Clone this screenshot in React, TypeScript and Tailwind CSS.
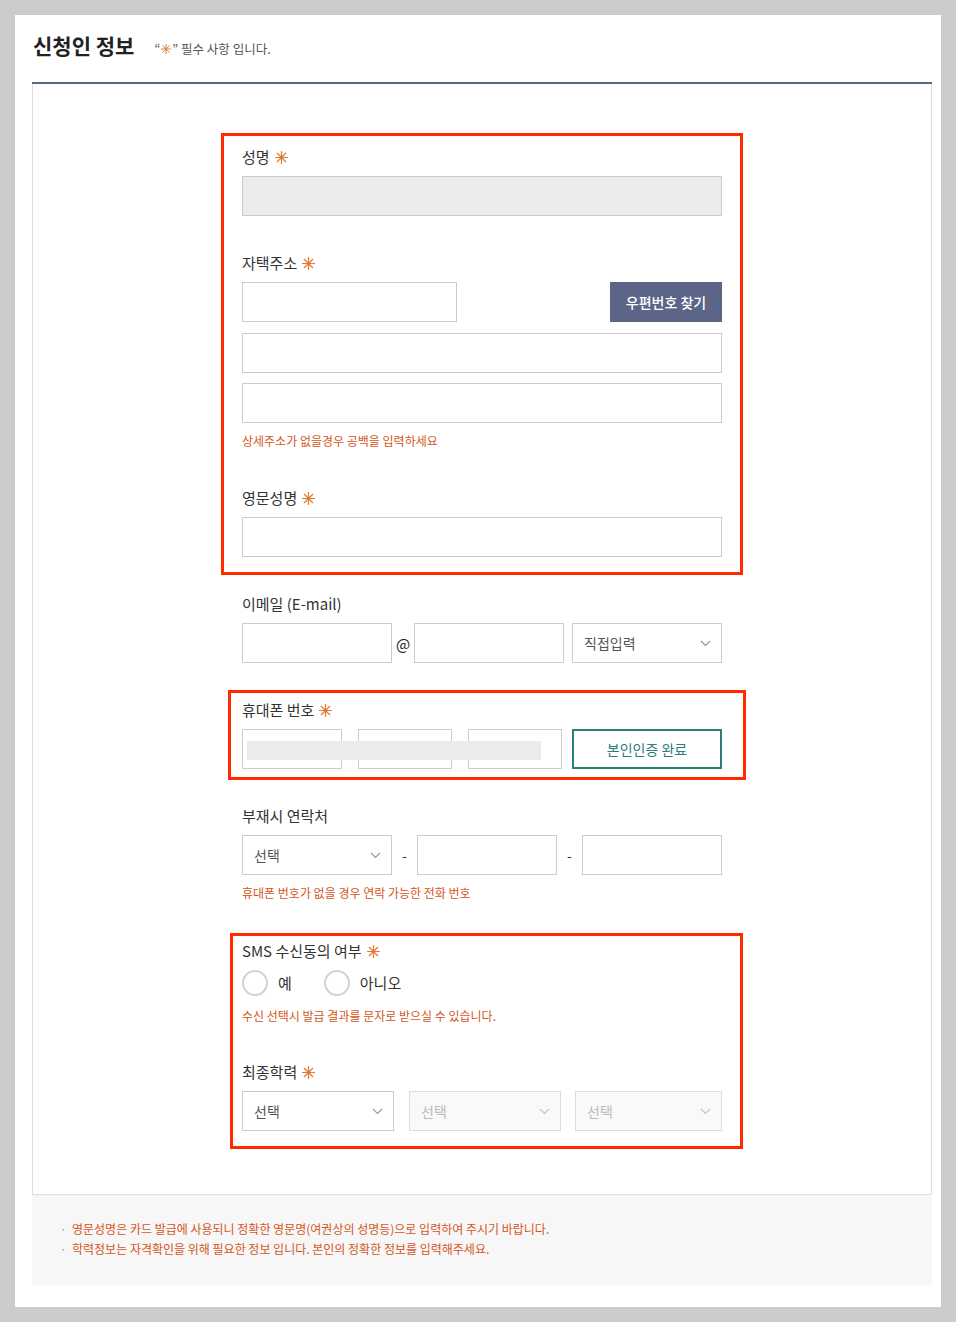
import React from "react";

const Star = ({ size = 12, className = "" }: { size?: number; className?: string }) => (
  <svg width={size} height={size} viewBox="0 0 12 12" className={`inline-block align-middle ${className}`}>
    <g stroke="#e0782f" strokeWidth="1.1" strokeLinecap="round">
      <line x1="6" y1="0.5" x2="6" y2="11.5" />
      <line x1="0.5" y1="6" x2="11.5" y2="6" />
      <line x1="2.1" y1="2.1" x2="9.9" y2="9.9" />
      <line x1="9.9" y1="2.1" x2="2.1" y2="9.9" />
    </g>
  </svg>
);

const Chevron = ({ color = "#9a9a9a" }: { color?: string }) => (
  <svg width="11" height="7" viewBox="0 0 11 7" className="shrink-0">
    <path d="M1 1 L5.5 5.5 L10 1" fill="none" stroke={color} strokeWidth="1.2" />
  </svg>
);

const Label = ({ children, star = false }: { children: React.ReactNode; star?: boolean }) => (
  <div className="h-[23px] leading-[23px] mb-[8px] text-[15px] text-[#333333]">
    {children}
    {star && <Star size={13} className="ml-[5px] -mt-[2px]" />}
  </div>
);

const Input = ({ className = "" }: { className?: string }) => (
  <div className={`h-[40px] border border-[#cccccc] bg-white ${className}`} />
);

const Select = ({
  text,
  className = "",
  disabled = false,
}: {
  text: string;
  className?: string;
  disabled?: boolean;
}) => (
  <div
    className={`h-[40px] border flex items-center justify-between pl-[11px] pr-[10px] text-[14px] ${
      disabled ? "bg-[#f9f9f9] border-[#dddddd] text-[#bbbbbb]" : "bg-white border-[#cccccc] text-[#555555]"
    } ${className}`}
  >
    <span>{text}</span>
    <Chevron color={disabled ? "#c4c4c4" : "#9a9a9a"} />
  </div>
);

const Hint = ({ children, className = "" }: { children: React.ReactNode; className?: string }) => (
  <div className={`text-[12px] leading-[18px] text-[#d4561c] ${className}`}>{children}</div>
);

const Radio = ({ label }: { label: string }) => (
  <div className="flex items-center">
    <div className="w-[26px] h-[26px] rounded-full border-[2.5px] border-[#d2d2d2] bg-white" />
    <span className="ml-[10px] text-[15px] text-[#333333]">{label}</span>
  </div>
);

export default function App() {
  return (
    <div
      className="min-h-[1322px] bg-[#cccccc] p-[15px]"
      style={{ fontFamily: '"Noto Sans CJK KR", "Noto Sans", sans-serif' }}
    >
      <div className="bg-white pb-[22px]">
        <div className="ml-[17px] mr-[9px]">
          {/* Header */}
          <div className="h-[67px] flex items-center pb-[5px] pl-[1px]">
            <h1 className="text-[21px] font-bold text-[#222222]">신청인 정보</h1>
            <span className="ml-[20px] mt-[6px] text-[12.5px] text-[#555555] flex items-center">
              “<Star size={10} className="mx-[1px]" />” 필수 사항 입니다.
            </span>
          </div>
          <div className="h-[2px] bg-[#5b6587]" />

          {/* Panel */}
          <div className="border-x border-b border-[#dddddd] pt-[61px] pb-[63px]">
            <div className="relative mx-auto w-[480px]">
              {/* 성명 */}
              <Label star>성명</Label>
              <div className="h-[40px] border border-[#cccccc] bg-[#ebebeb]" />

              {/* 자택주소 */}
              <div className="mt-[35px]">
                <Label star>자택주소</Label>
                <div className="flex justify-between">
                  <Input className="w-[215px]" />
                  <button className="w-[112px] h-[40px] bg-[#5b6587] text-white text-[14px] font-medium">
                    우편번호 찾기
                  </button>
                </div>
                <Input className="mt-[11px]" />
                <Input className="mt-[10px]" />
                <Hint className="mt-[9px]">상세주소가 없을경우 공백을 입력하세요</Hint>
              </div>

              {/* 영문성명 */}
              <div className="mt-[36px]">
                <Label star>영문성명</Label>
                <Input />
              </div>

              {/* 이메일 */}
              <div className="mt-[35px]">
                <Label>이메일 (E-mail)</Label>
                <div className="flex items-center">
                  <Input className="w-[150px]" />
                  <span className="w-[22px] text-center text-[15px] text-[#222222] pt-[2px]">@</span>
                  <Input className="w-[150px]" />
                  <Select text="직접입력" className="w-[150px] ml-[8px]" />
                </div>
              </div>

              {/* 휴대폰 번호 */}
              <div className="mt-[35px]">
                <Label star>휴대폰 번호</Label>
                <div className="relative flex">
                  <Input className="w-[100px]" />
                  <Input className="w-[94px] ml-[16px]" />
                  <Input className="w-[94px] ml-[16px]" />
                  <button className="w-[150px] h-[40px] ml-[10px] border-2 border-[#2a7f7a] bg-white text-[#2a7f7a] text-[14px]">
                    본인인증 완료
                  </button>
                  <div className="absolute left-[5px] top-[12px] w-[294px] h-[19px] bg-[#ebebeb]" />
                </div>
              </div>

              {/* 부재시 연락처 */}
              <div className="mt-[35px]">
                <Label>부재시 연락처</Label>
                <div className="flex items-center">
                  <Select text="선택" className="w-[150px]" />
                  <span className="w-[25px] text-center text-[14px] text-[#333333]">-</span>
                  <Input className="w-[140px]" />
                  <span className="w-[25px] text-center text-[14px] text-[#333333]">-</span>
                  <Input className="w-[140px]" />
                </div>
                <Hint className="mt-[9px]">휴대폰 번호가 없을 경우 연락 가능한 전화 번호</Hint>
              </div>

              {/* SMS */}
              <div className="mt-[37px]">
                <Label star>SMS 수신동의 여부</Label>
                <div className="flex items-center h-[26px]">
                  <Radio label="예" />
                  <div className="ml-[32px]">
                    <Radio label="아니오" />
                  </div>
                </div>
                <Hint className="mt-[11px]">수신 선택시 발급 결과를 문자로 받으실 수 있습니다.</Hint>
              </div>

              {/* 최종학력 */}
              <div className="mt-[35px]">
                <Label star>최종학력</Label>
                <div className="flex">
                  <Select text="선택" className="w-[152px]" />
                  <Select text="선택" className="w-[152px] ml-[15px]" disabled />
                  <Select text="선택" className="w-[147px] ml-[14px]" disabled />
                </div>
              </div>

              {/* Annotation overlays */}
              <div className="pointer-events-none absolute left-[-21px] top-[-12px] w-[522px] h-[442px] border-[3px] border-[#ff2a00]" />
              <div className="pointer-events-none absolute left-[-14px] top-[545px] w-[518px] h-[90px] border-[3px] border-[#ff2a00]" />
              <div className="pointer-events-none absolute left-[-12px] top-[788px] w-[513px] h-[216px] border-[3px] border-[#ff2a00]" />
            </div>
          </div>

          {/* Footer notes */}
          <div className="bg-[#f7f7f7] pt-[24px] pb-[26px] pl-[28px]">
            <div className="flex text-[12px] leading-[20px]">
              <span className="w-[12px] text-[#999999]">·</span>
              <span className="text-[#d4561c]">
                영문성명은 카드 발급에 사용되니 정확한 영문명(여권상의 성명등)으로 입력하여 주시기 바랍니다.
              </span>
            </div>
            <div className="flex text-[12px] leading-[20px]">
              <span className="w-[12px] text-[#999999]">·</span>
              <span className="text-[#d4561c]">
                학력정보는 자격확인을 위해 필요한 정보 입니다. 본인의 정확한 정보를 입력해주세요.
              </span>
            </div>
          </div>
        </div>
      </div>
    </div>
  );
}
